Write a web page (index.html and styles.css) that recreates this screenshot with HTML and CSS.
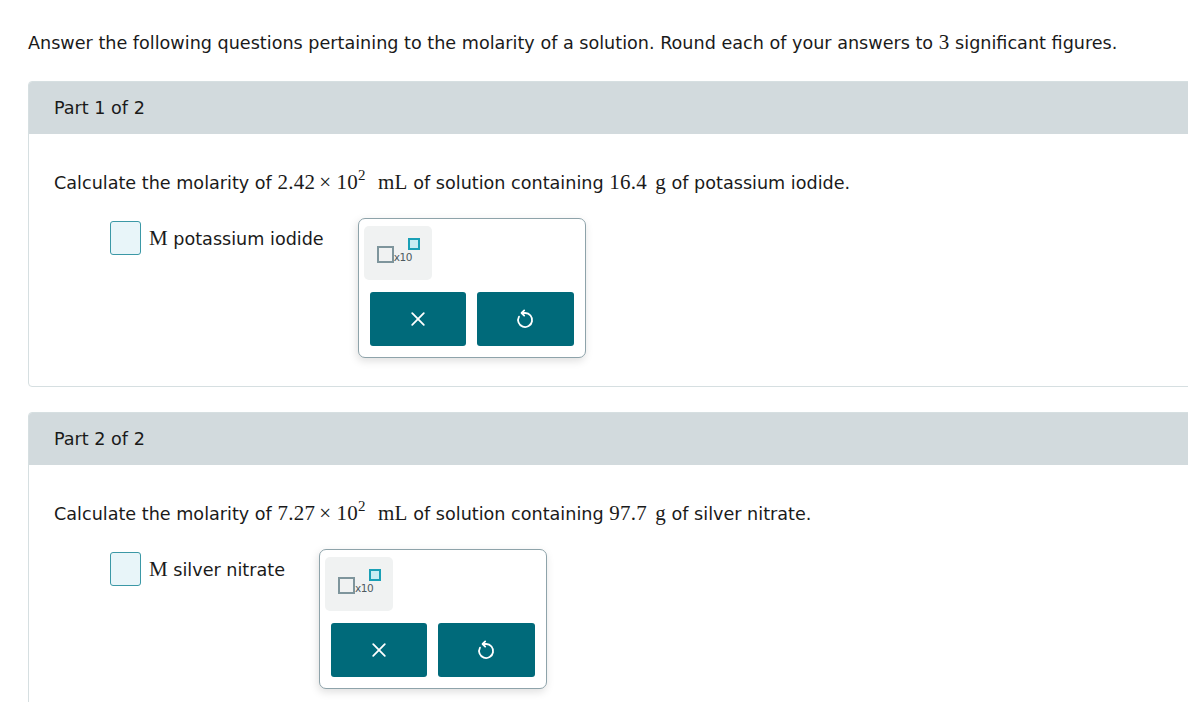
FILE: index.html
```html
<!DOCTYPE html>
<html>
<head>
<meta charset="utf-8">
<link rel="stylesheet" href="styles.css">
</head>
<body>
<div class="page">
  <p class="intro">Answer the following questions pertaining to the molarity of a solution. Round each of your answers to <span class="m">3</span> significant figures.</p>

  <section class="card">
    <div class="card-head">Part 1 of 2</div>
    <div class="card-body">
      <p class="question">Calculate the molarity of <span class="m">2.42<span class="times">×</span>10<sup>2</sup><span class="unit">mL</span></span> of solution containing <span class="m">16.4<span class="unit-g">g</span></span> of potassium iodide.</p>
      <div class="answer-row">
        <div class="answer">
          <span class="input"></span>
          <span class="label"><span class="m">M</span> potassium iodide</span>
        </div>
        <div class="popup">
          <div class="tool">
            <span class="tool-base"></span><span class="tool-x">x10</span><span class="tool-exp"></span>
          </div>
          <div class="btns">
            <button class="btn"><svg width="16" height="16" viewBox="0 0 16 16"><path d="M2.2 2.2 L13.8 13.8 M13.8 2.2 L2.2 13.8" stroke="#fff" stroke-width="1.8" fill="none" stroke-linecap="round"/></svg></button>
            <button class="btn"><svg width="20" height="20" viewBox="0 0 20 20"><path d="M4 7.6 A7 7 0 1 0 10.2 4 L6.8 4" stroke="#fff" stroke-width="1.8" fill="none" stroke-linecap="round" stroke-linejoin="round"/><path d="M9.2 1.4 L6.6 4 L9.2 6.6" stroke="#fff" stroke-width="1.8" fill="none" stroke-linecap="round" stroke-linejoin="round"/></svg></button>
          </div>
        </div>
      </div>
    </div>
  </section>

  <section class="card">
    <div class="card-head">Part 2 of 2</div>
    <div class="card-body">
      <p class="question">Calculate the molarity of <span class="m">7.27<span class="times">×</span>10<sup>2</sup><span class="unit">mL</span></span> of solution containing <span class="m">97.7<span class="unit-g">g</span></span> of silver nitrate.</p>
      <div class="answer-row">
        <div class="answer">
          <span class="input"></span>
          <span class="label"><span class="m">M</span> silver nitrate</span>
        </div>
        <div class="popup">
          <div class="tool">
            <span class="tool-base"></span><span class="tool-x">x10</span><span class="tool-exp"></span>
          </div>
          <div class="btns">
            <button class="btn"><svg width="16" height="16" viewBox="0 0 16 16"><path d="M2.2 2.2 L13.8 13.8 M13.8 2.2 L2.2 13.8" stroke="#fff" stroke-width="1.8" fill="none" stroke-linecap="round"/></svg></button>
            <button class="btn"><svg width="20" height="20" viewBox="0 0 20 20"><path d="M4 7.6 A7 7 0 1 0 10.2 4 L6.8 4" stroke="#fff" stroke-width="1.8" fill="none" stroke-linecap="round" stroke-linejoin="round"/><path d="M9.2 1.4 L6.6 4 L9.2 6.6" stroke="#fff" stroke-width="1.8" fill="none" stroke-linecap="round" stroke-linejoin="round"/></svg></button>
          </div>
        </div>
      </div>
    </div>
  </section>
</div>
</body>
</html>
```

FILE: styles.css
```css
html, body {
  margin: 0;
  padding: 0;
  background: #fff;
  overflow: hidden;
}
body {
  font-family: "DejaVu Sans", Verdana, sans-serif;
  font-size: 17.6px;
  color: #1a1a1a;
}
.page {
  padding: 30px 0 0 28px;
  width: 1200px;
}
.intro {
  margin: 0 0 26px 0;
  line-height: 24px;
}
.m {
  font-family: "Liberation Serif", "Times New Roman", serif;
  font-size: 21px;
  letter-spacing: 0.3px;
}
.times {
  margin: 0 5px 0 4px;
}
.unit {
  margin-left: 12px;
}
.unit-g {
  margin-left: 8px;
}
.m sup {
  font-size: 15px;
  line-height: 0;
  vertical-align: 9px;
}
.card {
  border: 1px solid #d6dfe1;
  border-radius: 4px;
  margin-bottom: 25px;
  overflow: hidden;
}
.card-head {
  background: #d2dadd;
  height: 52px;
  display: flex;
  align-items: center;
  padding-left: 25px;
}
.card-body {
  padding: 34px 0 28px 25px;
}
.question {
  margin: 0;
  line-height: 28px;
}
.answer-row {
  display: flex;
  align-items: flex-start;
  margin-top: 21px;
  padding-left: 56px;
}
.answer {
  display: flex;
  align-items: center;
  margin-top: 3px;
}
.input {
  width: 29px;
  height: 32px;
  border: 1px solid #3b98a6;
  border-radius: 3px;
  background: #e8f5f9;
}
.label {
  margin-left: 8px;
}
.label .m {
  letter-spacing: 0;
}
.popup {
  margin-left: 34px;
  width: 228px;
  border: 1px solid #8ea3aa;
  border-radius: 7px;
  background: #fff;
  box-shadow: -1px 3px 8px rgba(0, 0, 0, 0.13);
  padding: 7px 11px 11px 5px;
  box-sizing: border-box;
}
.tool {
  width: 68px;
  height: 54px;
  background: #f0f2f2;
  border-radius: 5px;
  position: relative;
}
.tool-base {
  position: absolute;
  left: 13px;
  top: 20px;
  width: 13px;
  height: 13px;
  border: 2px solid #7e959c;
}
.tool-x {
  position: absolute;
  left: 30px;
  top: 25px;
  font-family: "DejaVu Sans", sans-serif;
  font-size: 10.5px;
  letter-spacing: -0.4px;
  color: #4d5a60;
}
.tool-exp {
  position: absolute;
  left: 44px;
  top: 12px;
  width: 8px;
  height: 8px;
  border: 2px solid #1aa0b6;
  background: #c8eef3;
}
.btns {
  display: flex;
  gap: 11px;
  margin-top: 12px;
  padding-left: 6px;
}
.btn {
  width: 96px;
  height: 54px;
  background: #006a7a;
  border: none;
  border-radius: 3px;
  display: flex;
  align-items: center;
  justify-content: center;
  padding: 0;
}
.btn + .btn {
  width: 97px;
}
```
